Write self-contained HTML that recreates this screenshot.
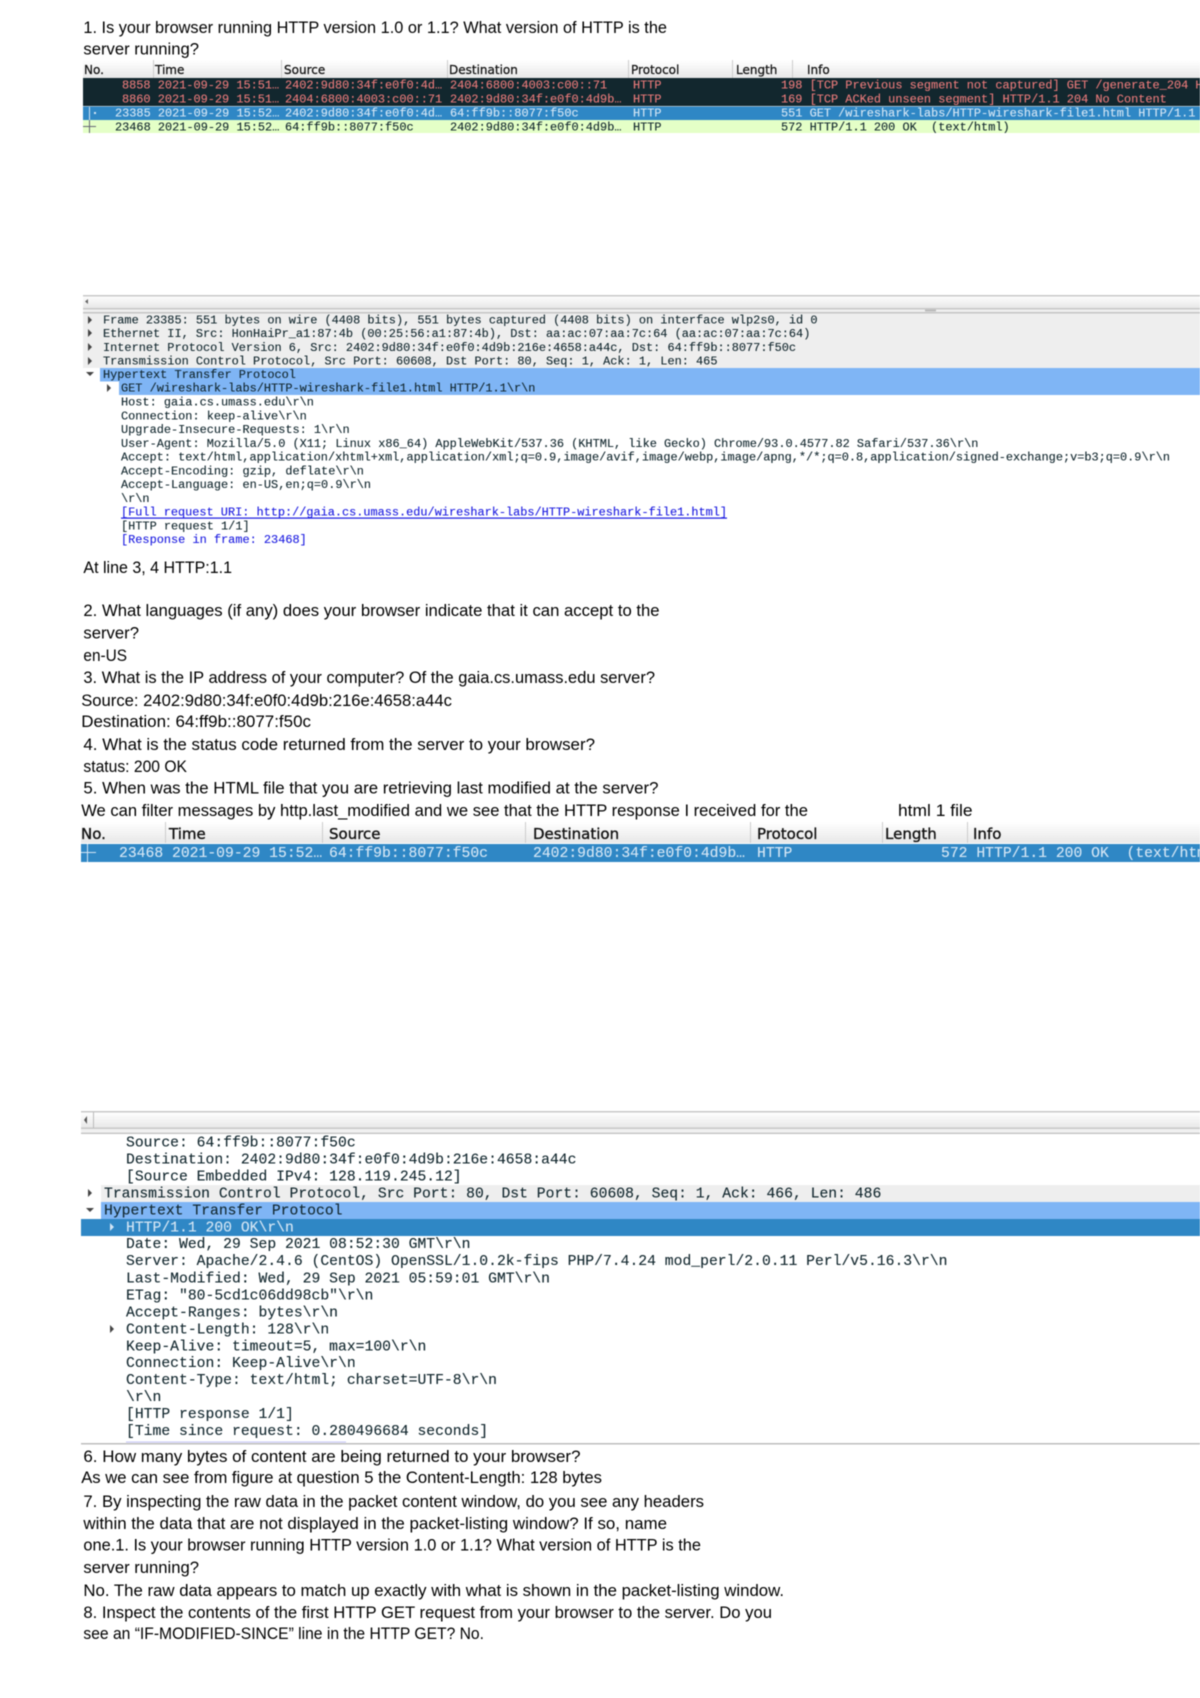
<!DOCTYPE html>
<html><head><meta charset="utf-8"><title>Wireshark HTTP lab answers</title>
<style>
html,body{margin:0;padding:0;background:#fff;width:1200px;height:1698px;overflow:hidden}
svg{display:block;position:absolute;left:0;top:0;filter:blur(.55px)}
.b{font:17px "Liberation Sans",sans-serif;fill:#000}
.m{font:11.92px "Liberation Mono",monospace;fill:#12272e;white-space:pre;stroke:#12272e;stroke-width:.12px}
.n{font:14.72px "Liberation Mono",monospace;fill:#12272e;white-space:pre;stroke:#12272e;stroke-width:.12px}
.h{font:12px "DejaVu Sans",sans-serif;fill:#111;stroke:#111;stroke-width:.25px}
.H{font:15px "DejaVu Sans",sans-serif;fill:#111;stroke:#111;stroke-width:.35px}
.r{fill:#e87a7a;stroke:#e87a7a}.w{fill:#d4e6f5;stroke:#d4e6f5}.l{fill:#1a1ae0;stroke:#1a1ae0}
</style></head><body>
<svg width="1200" height="1698" viewBox="0 0 1200 1698" xmlns="http://www.w3.org/2000/svg" xml:space="preserve">
<defs><linearGradient id="g" x1="0" y1="0" x2="0" y2="1"><stop offset="0" stop-color="#fff"/><stop offset="1" stop-color="#e8e8e8"/></linearGradient></defs>

<text class="b" x="83.4" y="33" textLength="583.6" lengthAdjust="spacingAndGlyphs">1. Is your browser running HTTP version 1.0 or 1.1? What version of HTTP is the</text>
<text class="b" x="83.4" y="54.5" textLength="115.6" lengthAdjust="spacingAndGlyphs">server running?</text>

<!-- table 1 -->
<rect x="83" y="60" width="1117" height="18" fill="url(#g)"/>
<g fill="#ccc"><rect x="153" y="60" width="1" height="18"/><rect x="281" y="60" width="1" height="18"/><rect x="447" y="60" width="1" height="18"/><rect x="732" y="60" width="1" height="18"/><rect x="792" y="60" width="1" height="18"/><rect x="628" y="60" width="1" height="18"/></g>
<text class="h" x="84" y="74">No.</text><text class="h" x="155" y="74">Time</text><text class="h" x="284" y="74">Source</text><text class="h" x="449" y="74">Destination</text><text class="h" x="631" y="74">Protocol</text><text class="h" x="736" y="74">Length</text><text class="h" x="807" y="74">Info</text>
<rect x="83" y="78" width="1117" height="28" fill="#12272e"/>
<rect x="83" y="106.500" width="1117" height="13.500" fill="#2f87c5"/>
<rect x="83" y="120" width="1117" height="13" fill="#e4ffc7"/>
<g>
<text class="m r" x="122" y="88.500">8858 2021-09-29 15:51…</text><text class="m r" x="285" y="88.500">2402:9d80:34f:e0f0:4d…</text><text class="m r" x="450" y="88.500">2404:6800:4003:c00::71</text><text class="m r" x="633" y="88.500">HTTP</text><text class="m r" x="781" y="88.500">198 [TCP Previous segment not captured] GET /generate_204 H</text>
<text class="m r" x="122" y="102.500">8860 2021-09-29 15:51…</text><text class="m r" x="285" y="102.500">2404:6800:4003:c00::71</text><text class="m r" x="450" y="102.500">2402:9d80:34f:e0f0:4d9b…</text><text class="m r" x="633" y="102.500">HTTP</text><text class="m r" x="781" y="102.500">169 [TCP ACKed unseen segment] HTTP/1.1 204 No Content</text>
<text class="m w" x="115" y="116.500">23385 2021-09-29 15:52…</text><text class="m w" x="285" y="116.500">2402:9d80:34f:e0f0:4d…</text><text class="m w" x="450" y="116.500">64:ff9b::8077:f50c</text><text class="m w" x="633" y="116.500">HTTP</text><text class="m w" x="781" y="116.500">551 GET /wireshark-labs/HTTP-wireshark-file1.html HTTP/1.1</text>
<text class="m" x="115" y="130.500">23468 2021-09-29 15:52…</text><text class="m" x="285" y="130.500">64:ff9b::8077:f50c</text><text class="m" x="450" y="130.500">2402:9d80:34f:e0f0:4d9b…</text><text class="m" x="633" y="130.500">HTTP</text><text class="m" x="781" y="130.500">572 HTTP/1.1 200 OK  (text/html)</text>
</g>
<rect x="89" y="107" width="1" height="13" fill="#d4e6f5"/><rect x="94" y="112" width="2" height="2" fill="#d4e6f5"/>
<rect x="89" y="120" width="1" height="13" fill="#667"/><rect x="83" y="126" width="13" height="1" fill="#667"/>

<!-- pane 1 band -->
<rect x="83" y="295" width="1117" height="13" fill="url(#g)"/>
<rect x="83" y="295" width="1117" height="1.500" fill="#c8c8c8"/>
<rect x="83" y="308" width="1117" height="1.500" fill="#c8c8c8"/>
<rect x="83" y="309.500" width="1117" height="3" fill="#f0f0f0"/>
<rect x="83" y="312" width="1117" height="1.500" fill="#c4c4c4"/>
<polygon points="85,301.500 88,299 88,304" fill="#666"/>
<rect x="925" y="309.500" width="11" height="2" fill="#bbb"/>

<!-- pane 1 -->
<rect x="83" y="313.500" width="1117" height="54.500" fill="#eeeeee"/>
<rect x="100" y="368" width="1100" height="13.500" fill="#7fb5f5"/>
<rect x="119" y="381.500" width="1081" height="13.500" fill="#7fb5f5"/>
<g fill="#444"><polygon points="88,316 92,320 88,324"/><polygon points="88,329 92,333 88,337"/><polygon points="88,343 92,347 88,351"/><polygon points="88,357 92,361 88,365"/><polygon points="86,372 94,372 90,376"/><polygon points="107,384 111,388 107,392"/></g>
<text class="m" x="103" y="323.500">Frame 23385: 551 bytes on wire (4408 bits), 551 bytes captured (4408 bits) on interface wlp2s0, id 0</text>
<text class="m" x="103" y="337">Ethernet II, Src: HonHaiPr_a1:87:4b (00:25:56:a1:87:4b), Dst: aa:ac:07:aa:7c:64 (aa:ac:07:aa:7c:64)</text>
<text class="m" x="103" y="351">Internet Protocol Version 6, Src: 2402:9d80:34f:e0f0:4d9b:216e:4658:a44c, Dst: 64:ff9b::8077:f50c</text>
<text class="m" x="103" y="364.500">Transmission Control Protocol, Src Port: 60608, Dst Port: 80, Seq: 1, Ack: 1, Len: 465</text>
<text class="m" x="103" y="378">Hypertext Transfer Protocol</text>
<text class="m" x="121" y="391.500">GET /wireshark-labs/HTTP-wireshark-file1.html HTTP/1.1\r\n</text>
<text class="m" x="121" y="405.500">Host: gaia.cs.umass.edu\r\n</text>
<text class="m" x="121" y="419.500">Connection: keep-alive\r\n</text>
<text class="m" x="121" y="433">Upgrade-Insecure-Requests: 1\r\n</text>
<text class="m" x="121" y="447">User-Agent: Mozilla/5.0 (X11; Linux x86_64) AppleWebKit/537.36 (KHTML, like Gecko) Chrome/93.0.4577.82 Safari/537.36\r\n</text>
<text class="m" x="121" y="460.500" textLength="1049" lengthAdjust="spacingAndGlyphs">Accept: text/html,application/xhtml+xml,application/xml;q=0.9,image/avif,image/webp,image/apng,*/*;q=0.8,application/signed-exchange;v=b3;q=0.9\r\n</text>
<text class="m" x="121" y="474.500">Accept-Encoding: gzip, deflate\r\n</text>
<text class="m" x="121" y="488">Accept-Language: en-US,en;q=0.9\r\n</text>
<text class="m" x="121" y="502">\r\n</text>
<text class="m l" x="121" y="515.500" textLength="606" lengthAdjust="spacingAndGlyphs">[Full request URI: http://gaia.cs.umass.edu/wireshark-labs/HTTP-wireshark-file1.html]</text>
<rect x="121" y="517.500" width="606" height="1.200" fill="#1a1ae0"/>
<text class="m" x="121" y="529.500">[HTTP request 1/1]</text>
<text class="m l" x="121" y="543">[Response in frame: 23468]</text>

<text class="b" x="83.4" y="573" textLength="148.600" lengthAdjust="spacingAndGlyphs">At line 3, 4 HTTP:1.1</text>
<text class="b" x="83.4" y="616" textLength="576.2" lengthAdjust="spacingAndGlyphs">2. What languages (if any) does your browser indicate that it can accept to the</text>
<text class="b" x="83.4" y="638.600" textLength="55.6" lengthAdjust="spacingAndGlyphs">server?</text>
<text class="b" x="83.4" y="661" textLength="43.6" lengthAdjust="spacingAndGlyphs">en-US</text>
<text class="b" x="83.4" y="683" textLength="571.6" lengthAdjust="spacingAndGlyphs">3. What is the IP address of your computer? Of the gaia.cs.umass.edu server?</text>
<text class="b" x="81.2" y="706" textLength="370.8" lengthAdjust="spacingAndGlyphs">Source: 2402:9d80:34f:e0f0:4d9b:216e:4658:a44c</text>
<text class="b" x="81.2" y="727" textLength="229.8" lengthAdjust="spacingAndGlyphs">Destination: 64:ff9b::8077:f50c</text>
<text class="b" x="83.4" y="750" textLength="511.6" lengthAdjust="spacingAndGlyphs">4. What is the status code returned from the server to your browser?</text>
<text class="b" x="83.4" y="772" textLength="103.6" lengthAdjust="spacingAndGlyphs">status: 200 OK</text>
<text class="b" x="83.4" y="793.500" textLength="575.100" lengthAdjust="spacingAndGlyphs">5. When was the HTML file that you are retrieving last modified at the server?</text>
<text class="b" x="81.2" y="816" textLength="726.8" lengthAdjust="spacingAndGlyphs">We can filter messages by http.last_modified and we see that the HTTP response I received for the</text>
<text class="b" x="898" y="816" textLength="74.5" lengthAdjust="spacingAndGlyphs">html 1 file</text>

<!-- table 2 -->
<rect x="81" y="822" width="1119" height="21" fill="url(#g)"/>
<g fill="#ccc"><rect x="165" y="822" width="1" height="21"/><rect x="322" y="822" width="1" height="21"/><rect x="525" y="822" width="1" height="21"/><rect x="750" y="822" width="1" height="21"/><rect x="882" y="822" width="1" height="21"/><rect x="967" y="822" width="1" height="21"/></g>
<text class="H" x="81" y="839">No.</text><text class="H" x="169" y="839">Time</text><text class="H" x="329" y="839">Source</text><text class="H" x="533" y="839">Destination</text><text class="H" x="757" y="839">Protocol</text><text class="H" x="885" y="839">Length</text><text class="H" x="973" y="839">Info</text>
<rect x="81" y="844" width="1119" height="18" fill="#2f87c5"/>
<g>
<text class="n w" x="119" y="857">23468 2021-09-29 15:52…</text><text class="n w" x="329" y="857">64:ff9b::8077:f50c</text><text class="n w" x="533" y="857">2402:9d80:34f:e0f0:4d9b…</text><text class="n w" x="757" y="857">HTTP</text><text class="n w" x="941" y="857">572 HTTP/1.1 200 OK  (text/html)</text>
</g>
<rect x="87" y="844" width="1" height="18" fill="#d4e6f5"/><rect x="81" y="852" width="15" height="1" fill="#d4e6f5"/>

<!-- pane 2 band -->
<rect x="81" y="1112" width="1119" height="16" fill="url(#g)"/>
<rect x="81" y="1111" width="1119" height="1.500" fill="#c8c8c8"/>
<rect x="81" y="1127.500" width="1119" height="1.500" fill="#c8c8c8"/>
<rect x="81" y="1129" width="1119" height="3" fill="#f0f0f0"/>
<rect x="81" y="1132.500" width="1119" height="1.500" fill="#c4c4c4"/>
<rect x="93" y="1112" width="1" height="16" fill="#bbb"/>
<polygon points="84,1120 87,1116 87,1124" fill="#555"/>

<text class="n" x="126" y="1146.500">Source: 64:ff9b::8077:f50c</text>
<text class="n" x="126" y="1163.500">Destination: 2402:9d80:34f:e0f0:4d9b:216e:4658:a44c</text>
<text class="n" x="126" y="1180.500">[Source Embedded IPv4: 128.119.245.12]</text>
<rect x="101" y="1185" width="1099" height="17" fill="#eeeeee"/>
<rect x="101" y="1202" width="1099" height="17" fill="#7fb5f5"/>
<rect x="81" y="1219" width="1119" height="17" fill="#2f87c5"/>
<g fill="#444"><polygon points="88,1189 92,1193 88,1197"/><polygon points="86,1208 94,1208 90,1212"/><polygon points="110,1325 114,1329 110,1333"/></g>
<polygon points="110,1223 114,1227 110,1231" fill="#d4e6f5"/>
<text class="n" x="104" y="1197.500">Transmission Control Protocol, Src Port: 80, Dst Port: 60608, Seq: 1, Ack: 466, Len: 486</text>
<text class="n" x="104" y="1214.500">Hypertext Transfer Protocol</text>
<text class="n w" x="126" y="1231.500">HTTP/1.1 200 OK\r\n</text>
<text class="n" x="126" y="1248">Date: Wed, 29 Sep 2021 08:52:30 GMT\r\n</text>
<text class="n" x="126" y="1265">Server: Apache/2.4.6 (CentOS) OpenSSL/1.0.2k-fips PHP/7.4.24 mod_perl/2.0.11 Perl/v5.16.3\r\n</text>
<text class="n" x="126" y="1282.500">Last-Modified: Wed, 29 Sep 2021 05:59:01 GMT\r\n</text>
<text class="n" x="126" y="1299.500">ETag: "80-5cd1c06dd98cb"\r\n</text>
<text class="n" x="126" y="1316.500">Accept-Ranges: bytes\r\n</text>
<text class="n" x="126" y="1333.500">Content-Length: 128\r\n</text>
<text class="n" x="126" y="1350.500">Keep-Alive: timeout=5, max=100\r\n</text>
<text class="n" x="126" y="1367">Connection: Keep-Alive\r\n</text>
<text class="n" x="126" y="1384">Content-Type: text/html; charset=UTF-8\r\n</text>
<text class="n" x="126" y="1401">\r\n</text>
<text class="n" x="126" y="1418">[HTTP response 1/1]</text>
<text class="n" x="126" y="1435">[Time since request: 0.280496684 seconds]</text>
<rect x="126" y="1441.500" width="220" height="1" fill="#9a9af0" opacity=".6"/>
<rect x="81" y="1443" width="1119" height="1.500" fill="#bdbdbd"/>

<text class="b" x="83.4" y="1462" textLength="497.1" lengthAdjust="spacingAndGlyphs">6. How many bytes of content are being returned to your browser?</text>
<text class="b" x="81.2" y="1483" textLength="520.8" lengthAdjust="spacingAndGlyphs">As we can see from figure at question 5 the Content-Length: 128 bytes</text>
<text class="b" x="83.4" y="1507" textLength="620.6" lengthAdjust="spacingAndGlyphs">7. By inspecting the raw data in the packet content window, do you see any headers</text>
<text class="b" x="83.4" y="1529" textLength="583.6" lengthAdjust="spacingAndGlyphs">within the data that are not displayed in the packet-listing window? If so, name</text>
<text class="b" x="83.4" y="1550.500" textLength="617.6" lengthAdjust="spacingAndGlyphs">one.1. Is your browser running HTTP version 1.0 or 1.1? What version of HTTP is the</text>
<text class="b" x="83.4" y="1573" textLength="115.6" lengthAdjust="spacingAndGlyphs">server running?</text>
<text class="b" x="83.4" y="1596" textLength="700.6" lengthAdjust="spacingAndGlyphs">No. The raw data appears to match up exactly with what is shown in the packet-listing window.</text>
<text class="b" x="83.4" y="1618" textLength="688.6" lengthAdjust="spacingAndGlyphs">8. Inspect the contents of the first HTTP GET request from your browser to the server. Do you</text>
<text class="b" x="83.4" y="1639" textLength="400.6" lengthAdjust="spacingAndGlyphs">see an “IF-MODIFIED-SINCE” line in the HTTP GET? No.</text>
</svg>
</body></html>
